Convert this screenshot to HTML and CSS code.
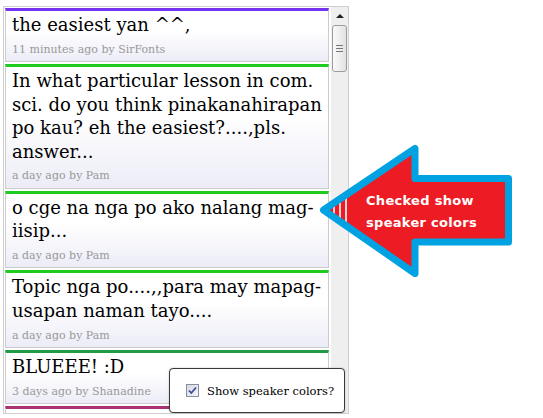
FILE: index.html
```html
<!DOCTYPE html>
<html>
<head>
<meta charset="utf-8">
<link rel="stylesheet" href="styles.css">
</head>
<body>
<div class="panel">
  <div class="list">
    <div class="card c-purple">
      <div class="msg">the easiest yan ^^,</div>
      <div class="meta">11 minutes ago by SirFonts</div>
    </div>
    <div class="card c-green">
      <div class="msg">In what particular lesson in com. sci. do you think pinakanahirapan po kau? eh the easiest?....,pls. answer...</div>
      <div class="meta">a day ago by Pam</div>
    </div>
    <div class="card c-green">
      <div class="msg">o cge na nga po ako nalang mag-iisip...</div>
      <div class="meta">a day ago by Pam</div>
    </div>
    <div class="card c-green">
      <div class="msg">Topic nga po....,,para may mapag-usapan naman tayo....</div>
      <div class="meta">a day ago by Pam</div>
    </div>
    <div class="card c-dkgreen">
      <div class="msg">BLUEEE! :D</div>
      <div class="meta">3 days ago by Shanadine</div>
    </div>
    <div class="card c-magenta card-empty"></div>
  </div>
  <div class="scrollbar">
    <div class="sb-btn"><span class="sb-arrow"></span></div>
    <div class="thumb"><span class="grip"></span><span class="grip"></span><span class="grip"></span></div>
  </div>
  <div class="popup">
    <span class="cbox"><svg width="11" height="11" viewBox="0 0 11 11"><path d="M2 5.5 L4.3 8 L9 2.5" fill="none" stroke="#3b4aa8" stroke-width="1.8"/></svg></span>
    <span class="plabel">Show speaker colors?</span>
  </div>
</div>
<svg class="callout" width="205" height="145" viewBox="0 0 205 145">
  <defs>
    <clipPath id="inside">
      <polygon points="8.5,70 100,8.5 100,38.5 193.5,38.5 193.5,102 100,102 100,133.5"/>
    </clipPath>
  </defs>
  <polygon points="8.5,70 100,8.5 100,38.5 193.5,38.5 193.5,102 100,102 100,133.5" fill="#ed1c24"/>
  <g clip-path="url(#inside)" stroke="#ffffff" stroke-width="1.6">
    <line x1="19" y1="50" x2="19" y2="90"/>
    <line x1="25" y1="50" x2="25" y2="90"/>
    <line x1="31" y1="50" x2="31" y2="90"/>
  </g>
  <polygon points="8.5,70 100,8.5 100,38.5 193.5,38.5 193.5,102 100,102 100,133.5" fill="none" stroke="#00a2e2" stroke-width="7" stroke-linejoin="round"/>
  <text x="51" y="65" class="ctext">Checked show</text>
  <text x="51" y="87" class="ctext">speaker colors</text>
</svg>
</body>
</html>
```
FILE: styles.css
```css
html, body {
  margin: 0;
  padding: 0;
  background: #ffffff;
}
body {
  position: relative;
  width: 543px;
  height: 418px;
  overflow: hidden;
  font-family: "DejaVu Serif", Georgia, serif;
}
.panel {
  position: relative;
  margin: 6px 0 0 3px;
  width: 344px;
  height: 406px;
  border: 1px solid #cfcfcf;
  display: flex;
}
.list {
  width: 324px;
  padding: 1px 2px 0 1px;
  overflow: hidden;
  display: flex;
  flex-direction: column;
  gap: 2px;
}
.card {
  flex: none;
  border: 1px solid #cccccc;
  border-top: 3px solid #22cc22;
  background: linear-gradient(to bottom, #ffffff 0%, #ffffff 40%, #ececf7 100%);
  padding: 2px 6px 4px 6px;
}
.card-empty {
  height: 48px;
}
.c-purple { border-top-color: #7433f0; }
.c-green { border-top-color: #1ecb1e; }
.c-dkgreen { border-top-color: #229944; }
.c-magenta { border-top-color: #a83272; }
.msg {
  font-size: 18px;
  line-height: 23.6px;
  color: #000000;
}
.meta {
  margin-top: 6px;
  font-size: 11px;
  line-height: 14.4px;
  color: #999999;
}
.scrollbar {
  width: 17px;
  background: #efefef;
  display: flex;
  flex-direction: column;
  align-items: center;
}
.sb-btn {
  width: 17px;
  height: 18px;
  display: flex;
  align-items: center;
  justify-content: center;
}
.sb-arrow {
  width: 0;
  height: 0;
  border-left: 4px solid transparent;
  border-right: 4px solid transparent;
  border-bottom: 4px solid #222222;
}
.thumb {
  width: 13px;
  height: 45px;
  border: 1px solid #9c9c9c;
  border-radius: 3px;
  background: linear-gradient(to right, #fafafa, #e2e2e2);
  display: flex;
  flex-direction: column;
  align-items: center;
  justify-content: center;
  gap: 2px;
}
.grip {
  width: 7px;
  height: 1px;
  background: #777777;
}
.popup {
  position: absolute;
  left: 165px;
  top: 361px;
  box-sizing: border-box;
  width: 176px;
  height: 45px;
  border: 1px solid #3a3a3a;
  border-radius: 4px;
  background: #ffffff;
  box-shadow: 0 0 2px rgba(0,0,0,0.25);
  display: flex;
  align-items: center;
  padding-left: 16px;
  gap: 8px;
}
.cbox {
  flex: none;
  width: 11px;
  height: 11px;
  border: 1px solid #8590a0;
  background: linear-gradient(to bottom right, #d8d8e0, #f4f4f8);
  display: flex;
}
.plabel {
  font-size: 11.5px;
  white-space: nowrap;
  color: #000000;
}
.callout {
  position: absolute;
  left: 315px;
  top: 140px;
}
.ctext {
  font-family: "DejaVu Sans", sans-serif;
  font-weight: bold;
  font-size: 13px;
  letter-spacing: 0.3px;
  fill: #ffffff;
}
```
